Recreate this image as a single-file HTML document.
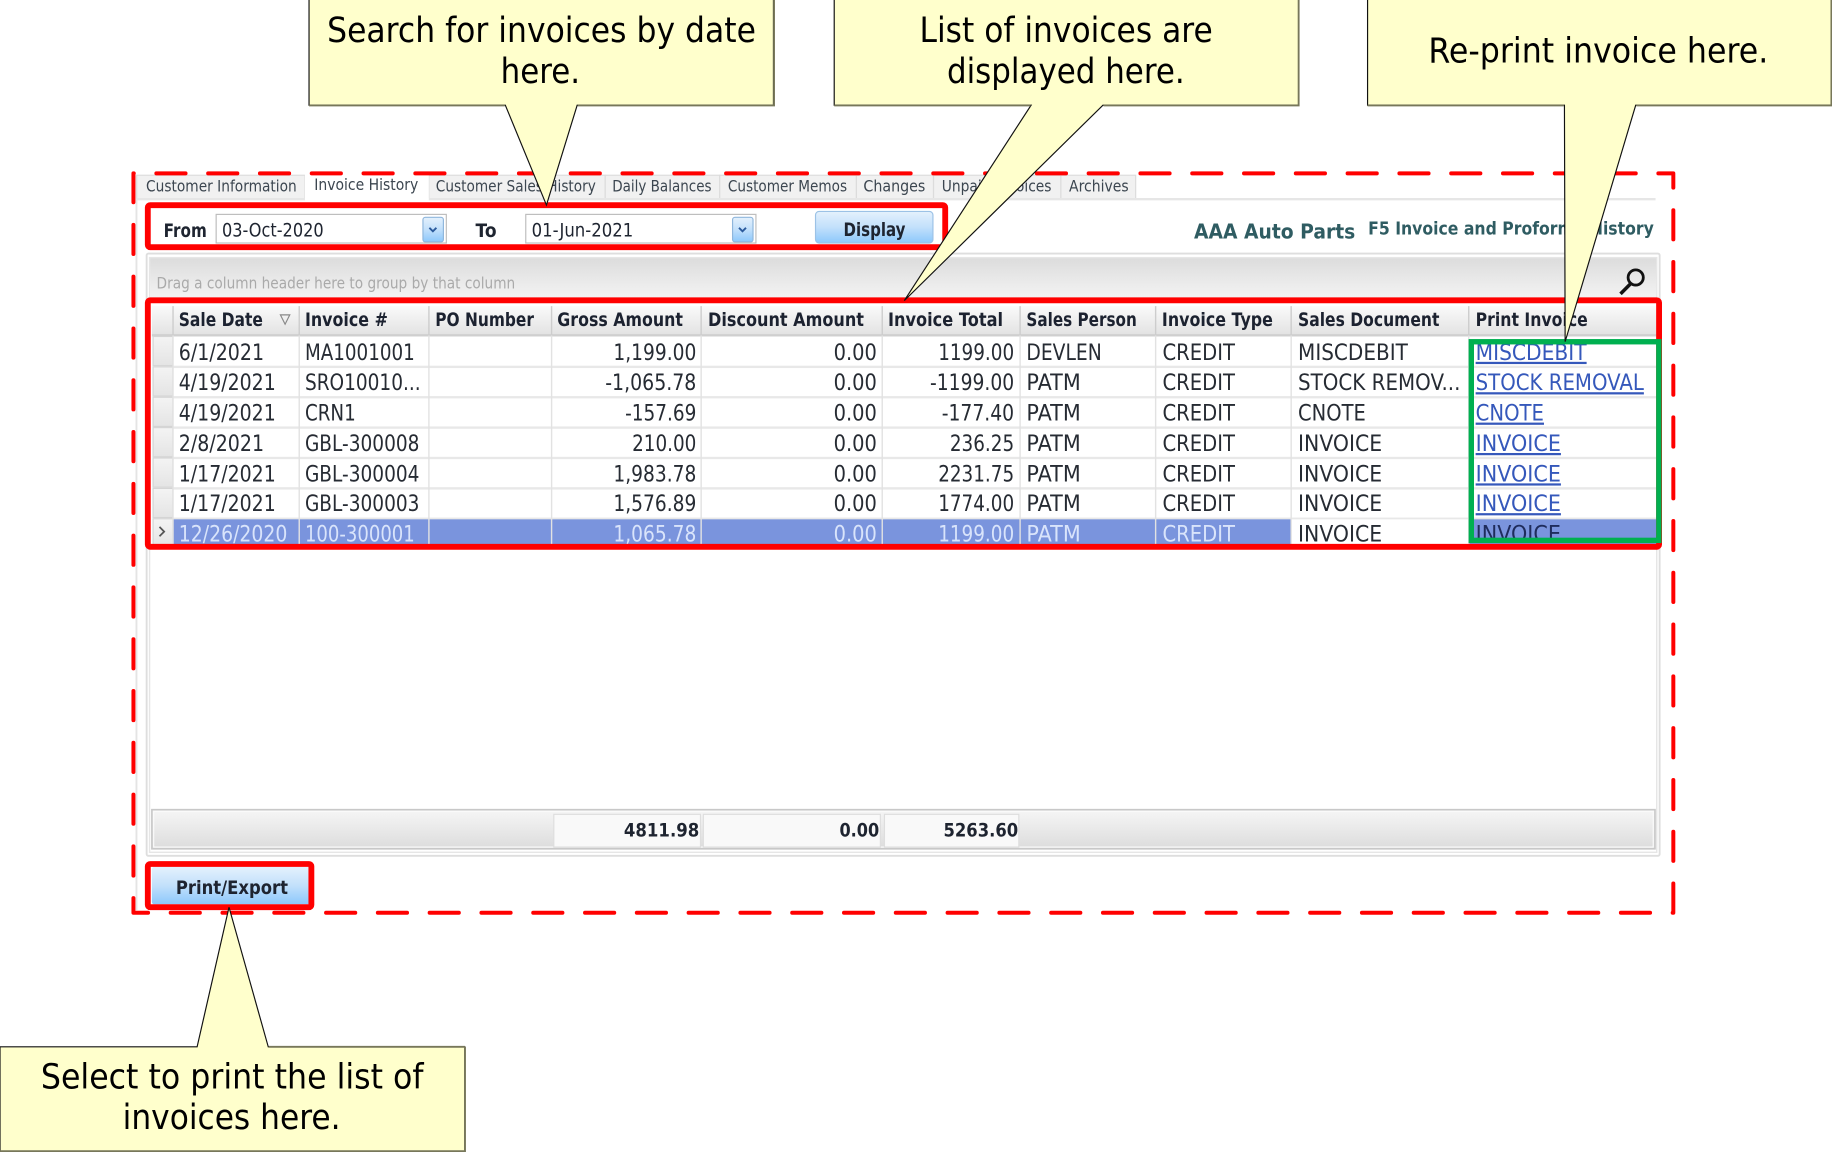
<!DOCTYPE html>
<html><head><meta charset="utf-8"><title>Invoice History</title>
<style>
html,body{margin:0;padding:0;background:#fff;width:1832px;height:1152px;overflow:hidden}
svg{display:block;filter:blur(.35px)}
text{font-family:"DejaVu Sans","Liberation Sans",sans-serif;fill:#1e2430}
.tab{font-size:14px;fill:#3c4650}
.h{font-size:16px;font-weight:bold;fill:#1c2230}
.c{font-size:19px;fill:#262b33}
.s{font-size:19px;fill:#d9e4fb}
.l{font-size:19px;fill:#3558bb;text-decoration:underline}
.f{font-size:16px;font-weight:bold}
.t{font-size:29.5px;fill:#000}
.teal{font-weight:bold;fill:#2f5c62}
</style></head><body>
<svg xmlns="http://www.w3.org/2000/svg" width="1832" height="1152" viewBox="0 0 1568 986">
<defs>
<linearGradient id="hd" x1="0" y1="0" x2="0" y2="1"><stop offset="0" stop-color="#fafafa"/><stop offset="1" stop-color="#e2e2e2"/></linearGradient>
<linearGradient id="gp" x1="0" y1="0" x2="0" y2="1"><stop offset="0" stop-color="#dcdcdc"/><stop offset="1" stop-color="#f6f6f6"/></linearGradient>
<linearGradient id="ft" x1="0" y1="0" x2="0" y2="1"><stop offset="0" stop-color="#f6f6f6"/><stop offset="1" stop-color="#dcdcdc"/></linearGradient>
<linearGradient id="bt" x1="0" y1="0" x2="0" y2="1"><stop offset="0" stop-color="#e4f1fc"/><stop offset=".5" stop-color="#c2e0fb"/><stop offset="1" stop-color="#8cc8fb"/></linearGradient>
<linearGradient id="ind" x1="0" y1="0" x2="0" y2="1"><stop offset="0" stop-color="#f4f4f4"/><stop offset="1" stop-color="#e4e4e4"/></linearGradient>
</defs>
<rect width="1568" height="986" fill="#fff"/>

<!-- window edge -->
<rect x="116" y="150" width="1.6" height="629" fill="#e4e4e4"/>

<!-- tabs -->
<g fill="#f1f1f1" stroke="#dcdcdc" stroke-width="1">
<rect x="117" y="150" width="144" height="20"/>
<rect x="367" y="150" width="151" height="20"/>
<rect x="518" y="150" width="98" height="20"/>
<rect x="616" y="150" width="117" height="20"/>
<rect x="733" y="150" width="66" height="20"/>
<rect x="799" y="150" width="109" height="20"/>
<rect x="908" y="150" width="64" height="20"/>
</g>
<rect x="117" y="169.5" width="1300" height="2" fill="#e6e6e6"/>
<rect x="261" y="148" width="106" height="24" fill="#fff"/>
<text class="tab" x="125" y="164" textLength="129" lengthAdjust="spacingAndGlyphs">Customer Information</text>
<text class="tab" x="269" y="162.5" textLength="89" lengthAdjust="spacingAndGlyphs">Invoice History</text>
<text class="tab" x="373" y="164" textLength="137" lengthAdjust="spacingAndGlyphs">Customer Sales History</text>
<text class="tab" x="524" y="164" textLength="85" lengthAdjust="spacingAndGlyphs">Daily Balances</text>
<text class="tab" x="623" y="164" textLength="102" lengthAdjust="spacingAndGlyphs">Customer Memos</text>
<text class="tab" x="739" y="164" textLength="53" lengthAdjust="spacingAndGlyphs">Changes</text>
<text class="tab" x="806" y="164" textLength="94" lengthAdjust="spacingAndGlyphs">Unpaid Invoices</text>
<text class="tab" x="915" y="164" textLength="51" lengthAdjust="spacingAndGlyphs">Archives</text>

<!-- filter row -->
<text class="f" x="140" y="203" textLength="37" lengthAdjust="spacingAndGlyphs">From</text>
<rect x="185" y="183.5" width="197" height="24.5" fill="#fff" stroke="#bdbdbd"/>
<text x="190" y="202.5" textLength="87" lengthAdjust="spacingAndGlyphs" style="font-size:16px">03-Oct-2020</text>
<rect x="362" y="186" width="17.5" height="21" rx="2" fill="url(#bt)" stroke="#8fb6dc"/>
<path d="M367.5 195l3 3 3-3" fill="none" stroke="#2b5a9c" stroke-width="1.6"/>
<text class="f" x="407" y="203" textLength="18" lengthAdjust="spacingAndGlyphs">To</text>
<rect x="450" y="183.5" width="197" height="24.5" fill="#fff" stroke="#bdbdbd"/>
<text x="455" y="202.5" textLength="87" lengthAdjust="spacingAndGlyphs" style="font-size:16px">01-Jun-2021</text>
<rect x="627" y="186" width="17.5" height="21" rx="2" fill="url(#bt)" stroke="#8fb6dc"/>
<path d="M632.5 195l3 3 3-3" fill="none" stroke="#2b5a9c" stroke-width="1.6"/>
<rect x="698" y="181" width="100.5" height="27" rx="3" fill="url(#bt)" stroke="#9cc2e6"/>
<text class="f" x="722" y="202" textLength="53" lengthAdjust="spacingAndGlyphs">Display</text>

<text class="teal" x="1022" y="204" textLength="138" lengthAdjust="spacingAndGlyphs" style="font-size:17.5px">AAA Auto Parts</text>
<text class="teal" x="1171" y="200.5" textLength="244.5" lengthAdjust="spacingAndGlyphs" style="font-size:15.5px">F5 Invoice and Proforma History</text>

<!-- grid frame -->
<rect x="125.5" y="217" width="1295" height="515.5" rx="1.5" fill="#fff" stroke="#dedede" stroke-width="1.6"/>
<rect x="128" y="220.5" width="1290" height="509" fill="#fff" stroke="#e6e6e6" stroke-width="1.2"/>
<rect x="128.5" y="221" width="1289" height="38" fill="url(#gp)"/>
<text x="134" y="247" textLength="307" lengthAdjust="spacingAndGlyphs" style="font-size:14px;fill:#aaaaaa">Drag a column header here to group by that column</text>
<circle cx="1400" cy="237.5" r="6.5" fill="none" stroke="#111" stroke-width="2.4"/>
<path d="M1395.5 243L1387 251.5" stroke="#111" stroke-width="3"/>

<!-- header -->
<rect x="130" y="262" width="1288" height="25" fill="url(#hd)"/>
<rect x="130" y="286" width="1288" height="2" fill="#cfcfcf"/>
<!-- indicator column -->
<g fill="url(#ind)" stroke="#d4d4d4" stroke-width="1">
<rect x="131" y="288" width="17" height="25"/><rect x="131" y="314" width="17" height="25"/><rect x="131" y="340" width="17" height="25"/><rect x="131" y="366" width="17" height="25"/><rect x="131" y="392" width="17" height="25"/><rect x="131" y="418" width="17" height="25"/><rect x="131" y="444" width="17" height="25"/>
</g>
<path d="M136.5 451l4 4-4 4" fill="none" stroke="#555" stroke-width="1.5"/>

<!-- selected row -->
<rect x="148" y="444" width="957" height="24" fill="#7a94dd"/>
<rect x="1257" y="444" width="161" height="24" fill="#7a94dd"/>

<!-- row lines -->
<g fill="#e8e8e8">
<rect x="148" y="313" width="1270" height="2"/><rect x="148" y="339" width="1270" height="2"/><rect x="148" y="365" width="1270" height="2"/><rect x="148" y="391" width="1270" height="2"/><rect x="148" y="417" width="1270" height="2"/><rect x="148" y="443" width="1270" height="1.5"/>
</g>
<!-- column lines -->
<g fill="#e2e2e2">
<rect x="147.5" y="287" width="1.2" height="181"/><rect x="255.5" y="287" width="1.2" height="181"/><rect x="366.5" y="287" width="1.2" height="181"/><rect x="471.5" y="287" width="1.2" height="181"/><rect x="599.5" y="287" width="1.2" height="181"/><rect x="754.5" y="287" width="1.2" height="181"/><rect x="872.5" y="287" width="1.2" height="181"/><rect x="988.5" y="287" width="1.2" height="181"/><rect x="1104.5" y="287" width="1.2" height="181"/><rect x="1256.5" y="287" width="1.2" height="181"/>
</g>
<g fill="#cdcdcd">
<rect x="147.5" y="262" width="1.2" height="25"/><rect x="255.5" y="262" width="1.2" height="25"/><rect x="366.5" y="262" width="1.2" height="25"/><rect x="471.5" y="262" width="1.2" height="25"/><rect x="599.5" y="262" width="1.2" height="25"/><rect x="754.5" y="262" width="1.2" height="25"/><rect x="872.5" y="262" width="1.2" height="25"/><rect x="988.5" y="262" width="1.2" height="25"/><rect x="1104.5" y="262" width="1.2" height="25"/><rect x="1256.5" y="262" width="1.2" height="25"/>
</g>

<!-- header text -->
<text class="h" x="153" y="279" textLength="72" lengthAdjust="spacingAndGlyphs">Sale Date</text>
<path d="M240 269.5h8l-4 8z" fill="none" stroke="#888" stroke-width="1"/>
<text class="h" x="261" y="279" textLength="71" lengthAdjust="spacingAndGlyphs">Invoice #</text>
<text class="h" x="372.5" y="279" textLength="84.5" lengthAdjust="spacingAndGlyphs">PO Number</text>
<text class="h" x="477" y="279" textLength="107.5" lengthAdjust="spacingAndGlyphs">Gross Amount</text>
<text class="h" x="606" y="279" textLength="133.5" lengthAdjust="spacingAndGlyphs">Discount Amount</text>
<text class="h" x="760" y="279" textLength="98.5" lengthAdjust="spacingAndGlyphs">Invoice Total</text>
<text class="h" x="878.5" y="279" textLength="94.5" lengthAdjust="spacingAndGlyphs">Sales Person</text>
<text class="h" x="994.5" y="279" textLength="95" lengthAdjust="spacingAndGlyphs">Invoice Type</text>
<text class="h" x="1111" y="279" textLength="121" lengthAdjust="spacingAndGlyphs">Sales Document</text>
<text class="h" x="1263" y="279" textLength="96" lengthAdjust="spacingAndGlyphs">Print Invoice</text>

<!-- row 1 -->
<text class="c" x="153" y="308" textLength="73" lengthAdjust="spacingAndGlyphs">6/1/2021</text>
<text class="c" x="261" y="308" textLength="94" lengthAdjust="spacingAndGlyphs">MA1001001</text>
<text class="c" x="525" y="308" textLength="71" lengthAdjust="spacingAndGlyphs">1,199.00</text>
<text class="c" x="713.5" y="308" textLength="37" lengthAdjust="spacingAndGlyphs">0.00</text>
<text class="c" x="803" y="308" textLength="65" lengthAdjust="spacingAndGlyphs">1199.00</text>
<text class="c" x="878.5" y="308" textLength="64.5" lengthAdjust="spacingAndGlyphs">DEVLEN</text>
<text class="c" x="995" y="308" textLength="62" lengthAdjust="spacingAndGlyphs">CREDIT</text>
<text class="c" x="1111" y="308" textLength="94" lengthAdjust="spacingAndGlyphs">MISCDEBIT</text>
<text class="l" x="1263" y="308" textLength="95" lengthAdjust="spacingAndGlyphs">MISCDEBIT</text>
<!-- row 2 -->
<text class="c" x="153" y="334" textLength="83" lengthAdjust="spacingAndGlyphs">4/19/2021</text>
<text class="c" x="261" y="334" textLength="99" lengthAdjust="spacingAndGlyphs">SRO10010...</text>
<text class="c" x="518" y="334" textLength="78" lengthAdjust="spacingAndGlyphs">-1,065.78</text>
<text class="c" x="713.5" y="334" textLength="37" lengthAdjust="spacingAndGlyphs">0.00</text>
<text class="c" x="796" y="334" textLength="72" lengthAdjust="spacingAndGlyphs">-1199.00</text>
<text class="c" x="878.5" y="334" textLength="46.5" lengthAdjust="spacingAndGlyphs">PATM</text>
<text class="c" x="995" y="334" textLength="62" lengthAdjust="spacingAndGlyphs">CREDIT</text>
<text class="c" x="1111" y="334" textLength="139" lengthAdjust="spacingAndGlyphs">STOCK REMOV...</text>
<text class="l" x="1263" y="334" textLength="144" lengthAdjust="spacingAndGlyphs">STOCK REMOVAL</text>
<!-- row 3 -->
<text class="c" x="153" y="360" textLength="83" lengthAdjust="spacingAndGlyphs">4/19/2021</text>
<text class="c" x="261" y="360" textLength="43.5" lengthAdjust="spacingAndGlyphs">CRN1</text>
<text class="c" x="535" y="360" textLength="61" lengthAdjust="spacingAndGlyphs">-157.69</text>
<text class="c" x="713.5" y="360" textLength="37" lengthAdjust="spacingAndGlyphs">0.00</text>
<text class="c" x="806" y="360" textLength="62" lengthAdjust="spacingAndGlyphs">-177.40</text>
<text class="c" x="878.5" y="360" textLength="46.5" lengthAdjust="spacingAndGlyphs">PATM</text>
<text class="c" x="995" y="360" textLength="62" lengthAdjust="spacingAndGlyphs">CREDIT</text>
<text class="c" x="1111" y="360" textLength="58" lengthAdjust="spacingAndGlyphs">CNOTE</text>
<text class="l" x="1263" y="360" textLength="58.5" lengthAdjust="spacingAndGlyphs">CNOTE</text>
<!-- row 4 -->
<text class="c" x="153" y="386" textLength="73" lengthAdjust="spacingAndGlyphs">2/8/2021</text>
<text class="c" x="261" y="386" textLength="98" lengthAdjust="spacingAndGlyphs">GBL-300008</text>
<text class="c" x="541" y="386" textLength="55" lengthAdjust="spacingAndGlyphs">210.00</text>
<text class="c" x="713.5" y="386" textLength="37" lengthAdjust="spacingAndGlyphs">0.00</text>
<text class="c" x="813" y="386" textLength="55" lengthAdjust="spacingAndGlyphs">236.25</text>
<text class="c" x="878.5" y="386" textLength="46.5" lengthAdjust="spacingAndGlyphs">PATM</text>
<text class="c" x="995" y="386" textLength="62" lengthAdjust="spacingAndGlyphs">CREDIT</text>
<text class="c" x="1111" y="386" textLength="72" lengthAdjust="spacingAndGlyphs">INVOICE</text>
<text class="l" x="1263" y="386" textLength="73" lengthAdjust="spacingAndGlyphs">INVOICE</text>
<!-- row 5 -->
<text class="c" x="153" y="412" textLength="83" lengthAdjust="spacingAndGlyphs">1/17/2021</text>
<text class="c" x="261" y="412" textLength="98" lengthAdjust="spacingAndGlyphs">GBL-300004</text>
<text class="c" x="525" y="412" textLength="71" lengthAdjust="spacingAndGlyphs">1,983.78</text>
<text class="c" x="713.5" y="412" textLength="37" lengthAdjust="spacingAndGlyphs">0.00</text>
<text class="c" x="803" y="412" textLength="65" lengthAdjust="spacingAndGlyphs">2231.75</text>
<text class="c" x="878.5" y="412" textLength="46.5" lengthAdjust="spacingAndGlyphs">PATM</text>
<text class="c" x="995" y="412" textLength="62" lengthAdjust="spacingAndGlyphs">CREDIT</text>
<text class="c" x="1111" y="412" textLength="72" lengthAdjust="spacingAndGlyphs">INVOICE</text>
<text class="l" x="1263" y="412" textLength="73" lengthAdjust="spacingAndGlyphs">INVOICE</text>
<!-- row 6 -->
<text class="c" x="153" y="437.5" textLength="83" lengthAdjust="spacingAndGlyphs">1/17/2021</text>
<text class="c" x="261" y="437.5" textLength="98" lengthAdjust="spacingAndGlyphs">GBL-300003</text>
<text class="c" x="525" y="437.5" textLength="71" lengthAdjust="spacingAndGlyphs">1,576.89</text>
<text class="c" x="713.5" y="437.5" textLength="37" lengthAdjust="spacingAndGlyphs">0.00</text>
<text class="c" x="803" y="437.5" textLength="65" lengthAdjust="spacingAndGlyphs">1774.00</text>
<text class="c" x="878.5" y="437.5" textLength="46.5" lengthAdjust="spacingAndGlyphs">PATM</text>
<text class="c" x="995" y="437.5" textLength="62" lengthAdjust="spacingAndGlyphs">CREDIT</text>
<text class="c" x="1111" y="437.5" textLength="72" lengthAdjust="spacingAndGlyphs">INVOICE</text>
<text class="l" x="1263" y="437.5" textLength="73" lengthAdjust="spacingAndGlyphs">INVOICE</text>
<!-- row 7 selected -->
<text class="s" x="153" y="463.5" textLength="93" lengthAdjust="spacingAndGlyphs">12/26/2020</text>
<text class="s" x="261" y="463.5" textLength="94" lengthAdjust="spacingAndGlyphs">100-300001</text>
<text class="s" x="525" y="463.5" textLength="71" lengthAdjust="spacingAndGlyphs">1,065.78</text>
<text class="s" x="713.5" y="463.5" textLength="37" lengthAdjust="spacingAndGlyphs">0.00</text>
<text class="s" x="803" y="463.5" textLength="65" lengthAdjust="spacingAndGlyphs">1199.00</text>
<text class="s" x="878.5" y="463.5" textLength="46.5" lengthAdjust="spacingAndGlyphs">PATM</text>
<text class="s" x="995" y="463.5" textLength="62" lengthAdjust="spacingAndGlyphs">CREDIT</text>
<text class="c" x="1111" y="463.5" textLength="72" lengthAdjust="spacingAndGlyphs">INVOICE</text>
<text class="c" x="1263" y="463.5" textLength="73" lengthAdjust="spacingAndGlyphs" style="fill:#1f2c5c">INVOICE</text>

<!-- footer -->
<rect x="130" y="693" width="1286.5" height="33.5" fill="url(#ft)" stroke="#c8c8c8" stroke-width="1.4"/>
<rect x="131.5" y="694.5" width="1283.5" height="30.5" fill="none" stroke="#fafafa" stroke-width="1"/>
<g fill="#f9f9f9" stroke="#dedede">
<rect x="474" y="697" width="125.5" height="28"/><rect x="602" y="697" width="151.5" height="28"/><rect x="757" y="697" width="115" height="28"/>
</g>
<text class="f" x="534" y="716" textLength="64.5" lengthAdjust="spacingAndGlyphs">4811.98</text>
<text class="f" x="718.5" y="716" textLength="34" lengthAdjust="spacingAndGlyphs">0.00</text>
<text class="f" x="807.5" y="716" textLength="64" lengthAdjust="spacingAndGlyphs">5263.60</text>

<!-- print button -->
<rect x="130" y="742" width="135" height="32" rx="2" fill="url(#bt)"/>
<text class="f" x="150.5" y="765" textLength="96" lengthAdjust="spacingAndGlyphs">Print/Export</text>

<!-- red highlight boxes -->
<g fill="none" stroke="#ff0000">
<rect x="126.5" y="175.6" width="682.5" height="36" rx="2" stroke-width="5"/>
<rect x="126.5" y="257" width="1293.5" height="211" rx="2" stroke-width="5"/>
<rect x="126.5" y="739.5" width="140" height="37" rx="2" stroke-width="5"/>
<path d="M1432.2 781.2V148.4H114.2V781.2H1432.2" stroke-width="3.4" stroke-linecap="round" stroke-linejoin="round" stroke-dasharray="25 19.33"/>
</g>
<rect x="1259.3" y="292.5" width="160.5" height="170" fill="none" stroke="#00b050" stroke-width="4.6"/>

<!-- callouts -->
<g fill="#ffffcc" stroke="#111" stroke-width="1">
<path d="M264.5 -1V90H432.5L467.7 175.5L494 90H662V-1z"/>
<path d="M714 -1V90H882.5L774 257.3L944 90H1111.5V-1z"/>
<path d="M1170.5 -1V90H1339L1339.6 292.4L1400 90H1567.5V-1z"/>
<path d="M0 896H168.7L196 776.5L229.6 896H397.8V985.5H0z"/>
</g>
<g stroke="#77775a" stroke-width="1.6" fill="none">
<path d="M264.5 90.3H432M494.5 90.3H662.5V0"/>
<path d="M714 90.3H882M944.5 90.3H1111.5V0"/>
<path d="M1170.5 90.3H1338.5M1400.5 90.3H1567.5V0"/>
<path d="M0 985.3H398V896M230 896H398"/>
</g>
<text class="t" x="280" y="36" textLength="367" lengthAdjust="spacingAndGlyphs">Search for invoices by date</text>
<text class="t" x="428.5" y="71" textLength="68" lengthAdjust="spacingAndGlyphs">here.</text>
<text class="t" x="787" y="36" textLength="251" lengthAdjust="spacingAndGlyphs">List of invoices are</text>
<text class="t" x="810.5" y="71" textLength="203.5" lengthAdjust="spacingAndGlyphs">displayed here.</text>
<text class="t" x="1222.5" y="53.5" textLength="291" lengthAdjust="spacingAndGlyphs">Re-print invoice here.</text>
<text class="t" x="35" y="931.5" textLength="327.5" lengthAdjust="spacingAndGlyphs">Select to print the list of</text>
<text class="t" x="105" y="966.5" textLength="186.5" lengthAdjust="spacingAndGlyphs">invoices here.</text>
</svg>
</body></html>
